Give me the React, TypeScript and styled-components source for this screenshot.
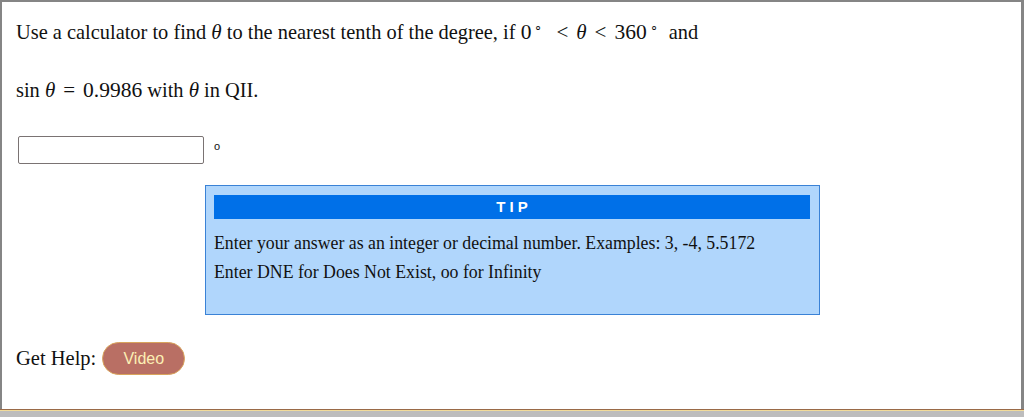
import React from 'react';
import styled, { createGlobalStyle } from 'styled-components';

const GlobalStyle = createGlobalStyle`
    html, body {
        margin: 0;
        padding: 0;
        background: #ffffff;
    }
    body {
        font-family: "Liberation Serif", "Times New Roman", serif;
        color: #111111;
    }
`;

const Page = styled.div`
    width: 1024px;
    height: 417px;
    display: flex;
    flex-direction: column;
    overflow: hidden;
`;

const Frame = styled.div`
    flex: 1;
    border-top: 2px solid #858585;
    border-left: 2px solid #858585;
    border-right: 3px solid #858585;
    padding: 17px 0 0 14px;
    display: flex;
    flex-direction: column;
`;

const Question = styled.div`
    font-size: 20.4px;
    line-height: 26px;
    margin: 0;
`;

const QuestionLine = styled.div<{ $gap?: number }>`
    margin-top: ${p => p.$gap ?? 0}px;
    white-space: nowrap;
`;

const Num = styled.span`
    font-size: 21.5px;
`;

const Var = styled.i`
    font-style: italic;
    font-size: 21px;
`;

const Op = styled.span`
    padding: 0 8px;
    font-size: 21px;
`;

const Deg = styled.sup`
    font-size: 13px;
    vertical-align: 8px;
    line-height: 0;
    padding: 0 6px 0 3px;
`;

const AnswerRow = styled.div`
    display: flex;
    align-items: flex-start;
    margin-top: 33px;
    padding-left: 2px;
`;

const AnswerInput = styled.input`
    box-sizing: border-box;
    width: 186px;
    height: 28px;
    border: 1px solid #7a7373;
    border-radius: 2px;
    background: #ffffff;
    outline: none;
`;

const DegreeMark = styled.span`
    font-family: "Liberation Sans", Arial, sans-serif;
    font-size: 11px;
    line-height: 11px;
    margin: 5px 0 0 10px;
`;

const TipBox = styled.div`
    box-sizing: border-box;
    width: 615px;
    height: 130px;
    margin: 21px 0 0 189px;
    background: #b0d6fc;
    border: 1px solid #3a82d6;
    padding: 9px 9px 0 8px;
`;

const TipHeader = styled.div`
    height: 24px;
    background: #0070e8;
    color: #ffffff;
    font-family: "Liberation Sans", Arial, sans-serif;
    font-weight: bold;
    font-size: 15px;
    letter-spacing: 4px;
    text-indent: 4px;
    line-height: 24px;
    text-align: center;
`;

const TipText = styled.div`
    font-size: 17.8px;
    line-height: 29px;
    margin-top: 10px;
    color: #111111;
    white-space: nowrap;
`;

const HelpRow = styled.div`
    display: flex;
    align-items: center;
    gap: 6px;
    margin-top: 27px;
    font-size: 20.5px;
`;

const VideoButton = styled.button`
    box-sizing: border-box;
    width: 83px;
    height: 33px;
    border-radius: 17px;
    border: 1px solid #d9a45c;
    background: #b96f64;
    color: #fcefb4;
    font-family: "Liberation Sans", Arial, sans-serif;
    font-size: 16px;
    cursor: pointer;
`;

const Footer = styled.div`
    height: 7px;
    background: #bdbdbd;
    border-top: 1px solid #9a6a48;
    box-shadow: inset 0 1px 0 #f2dc9a;
`;

const theta = <Var>θ</Var>;

export default function App() {
    return (
        <Page>
            <GlobalStyle />
            <Frame>
                <Question>
                    <QuestionLine>
                        Use a calculator to find {theta} to the nearest tenth of the degree, if <Num>0</Num><Deg>∘</Deg>
                        <Op>&lt;</Op>{theta}<Op>&lt;</Op><Num>360</Num><Deg>∘</Deg> and
                    </QuestionLine>
                    <QuestionLine $gap={32}>
                        sin {theta}<Op>=</Op><Num>0.9986</Num> with {theta} in QII.
                    </QuestionLine>
                </Question>
                <AnswerRow>
                    <AnswerInput type="text" />
                    <DegreeMark>o</DegreeMark>
                </AnswerRow>
                <TipBox>
                    <TipHeader>TIP</TipHeader>
                    <TipText>
                        Enter your answer as an integer or decimal number. Examples: 3, -4, 5.5172
                        <br />
                        Enter DNE for Does Not Exist, oo for Infinity
                    </TipText>
                </TipBox>
                <HelpRow>
                    Get Help:
                    <VideoButton>Video</VideoButton>
                </HelpRow>
            </Frame>
            <Footer />
        </Page>
    );
}
